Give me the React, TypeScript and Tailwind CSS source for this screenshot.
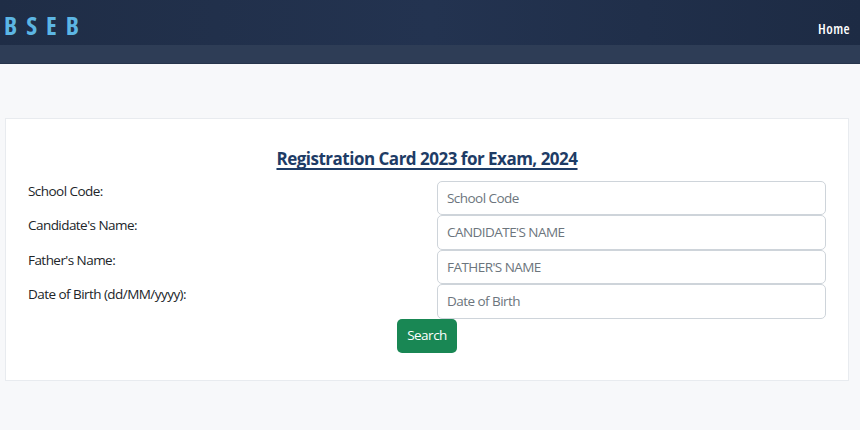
import React from "react";

const cond = { fontFamily: '"Open Sans", "Noto Sans", sans-serif' };

export default function App() {
  const labels = [
    "School Code:",
    "Candidate's Name:",
    "Father's Name:",
    "Date of Birth (dd/MM/yyyy):",
  ];
  const placeholders = ["School Code", "CANDIDATE'S NAME", "FATHER'S NAME", "Date of Birth"];
  return (
    <div className="w-[860px] h-[430px] bg-[#f7f8fa] overflow-hidden" style={cond}>
      <div className="bg-[#1e2c45]">
        <div className="h-[45px] flex items-end justify-between pl-[4px] pr-[10px] pb-[7px] bg-gradient-to-r from-[#1f2d46] via-[#233350] to-[#1d2b44]">
          <div className="text-[25px] font-bold tracking-[9px] text-[#5cb6e4] leading-none [font-stretch:75%]">BSEB</div>
          <div className="text-[14px] font-semibold text-white leading-none pb-[2px] tracking-[0.4px] [font-stretch:75%]">Home</div>
        </div>
        <div className="h-[19px] bg-[#2e3d56] border-b border-[#26344b]"></div>
      </div>
      <div className="pt-[54px] px-[5px] pr-[11px]">
        <div className="bg-white border border-[#e8ebef] h-[263px] pt-[27px]">
          <div className="text-center">
            <span className="text-[17px] font-bold text-[#1e3c66] underline underline-offset-[3px] decoration-[1.5px] [text-decoration-skip-ink:none] tracking-[-0.5px]">
              Registration Card 2023 for Exam, 2024
            </span>
          </div>
          <div className="flex mt-[9px] pl-[22px] pr-[22px]">
            <div className="w-[409px] flex flex-col">
              {labels.map((l) => (
                <div key={l} className="h-[34.5px] text-[13.5px] tracking-[-0.55px] text-[#212529] leading-[20px]">
                  {l}
                </div>
              ))}
            </div>
            <div className="flex-1 flex flex-col">
              {placeholders.map((p) => (
                <input
                  key={p}
                  placeholder={p}
                  className="h-[34.5px] w-full border border-[#ced4da] rounded-[5px] px-[9px] text-[13.5px] tracking-[-0.55px] placeholder:text-[#6c757d] bg-white outline-none"
                />
              ))}
            </div>
          </div>
          <div className="flex justify-center">
            <button className="h-[34px] px-[10px] rounded-[5px] bg-[#198754] text-white text-[13.5px] tracking-[-0.5px]">
              Search
            </button>
          </div>
        </div>
      </div>
    </div>
  );
}
